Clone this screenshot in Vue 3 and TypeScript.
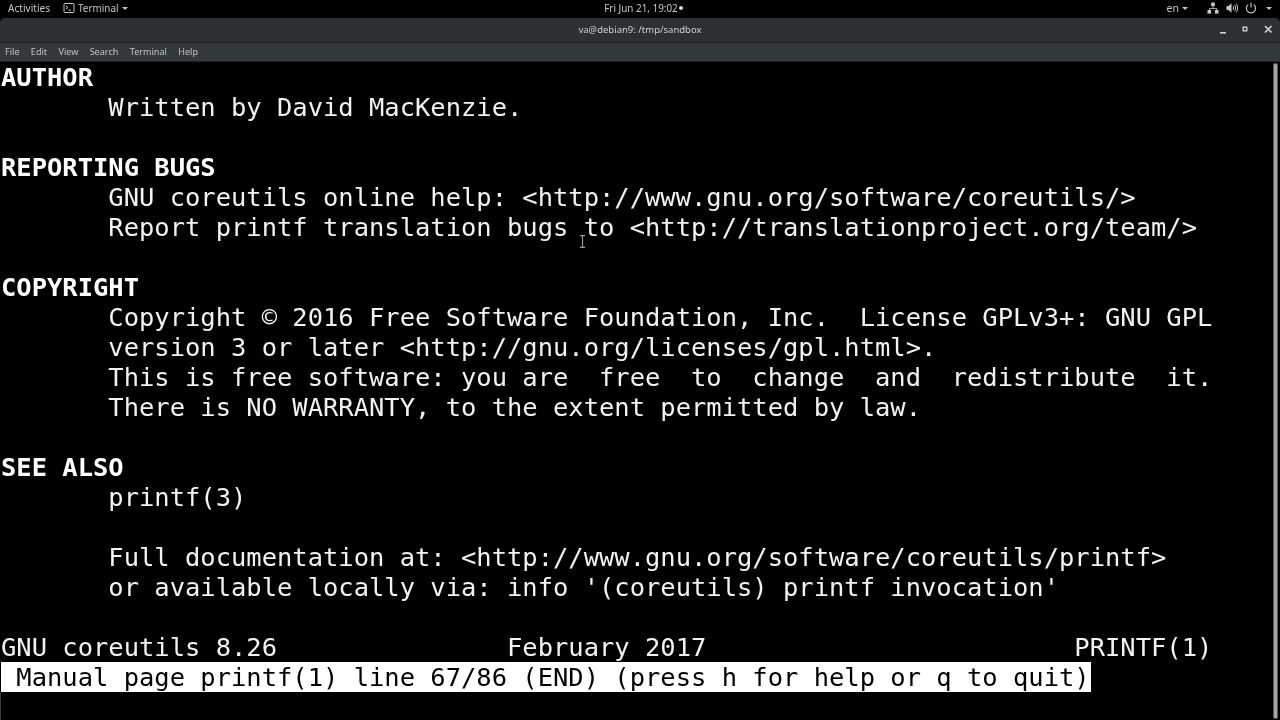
<script setup lang="ts">
interface Line { text: string; bold?: boolean; status?: boolean }
const lines: Line[] = [
  { text: 'AUTHOR', bold: true },
  { text: '       Written by David MacKenzie.' },
  { text: '' },
  { text: 'REPORTING BUGS', bold: true },
  { text: '       GNU coreutils online help: <http://www.gnu.org/software/coreutils/>' },
  { text: '       Report printf translation bugs to <http://translationproject.org/team/>' },
  { text: '' },
  { text: 'COPYRIGHT', bold: true },
  { text: '       Copyright © 2016 Free Software Foundation, Inc.  License GPLv3+: GNU GPL' },
  { text: '       version 3 or later <http://gnu.org/licenses/gpl.html>.' },
  { text: '       This is free software: you are  free  to  change  and  redistribute  it.' },
  { text: '       There is NO WARRANTY, to the extent permitted by law.' },
  { text: '' },
  { text: 'SEE ALSO', bold: true },
  { text: '       printf(3)' },
  { text: '' },
  { text: '       Full documentation at: <http://www.gnu.org/software/coreutils/printf>' },
  { text: "       or available locally via: info '(coreutils) printf invocation'" },
  { text: '' },
  { text: 'GNU coreutils 8.26               February 2017                        PRINTF(1)' },
  { text: ' Manual page printf(1) line 67/86 (END) (press h for help or q to quit)', status: true },
]
const menus = ['File', 'Edit', 'View', 'Search', 'Terminal', 'Help']
</script>

<template>
  <div class="screen">
    <header class="topbar">
      <div class="top-left">
        <span>Activities</span>
        <span class="app">
          <svg width="12" height="12" viewBox="0 0 12 12" fill="none" stroke="#c9c9c9">
            <rect x="1" y="1.5" width="10" height="9" rx="1" />
            <path d="M3 4l2 1.5L3 7M5.5 8H8" />
          </svg>
          <span class="app-name">Terminal</span>
          <i class="caret"></i>
        </span>
      </div>
      <div class="clock">Fri Jun 21, 19:02<i class="dot"></i></div>
      <div class="top-right">
        <span class="lang">en<i class="caret"></i></span>
        <svg width="12" height="12" viewBox="0 0 12 12" fill="#c9c9c9">
          <rect x="4.2" y="0.5" width="3.6" height="3.6" />
          <rect x="0.5" y="8" width="3.6" height="3.6" />
          <rect x="7.9" y="8" width="3.6" height="3.6" />
          <path d="M5.6 4h.8v2.2H10V8h-.8V7H2.8v1H2V6.2h3.6z" />
        </svg>
        <svg width="12" height="12" viewBox="0 0 12 12" fill="#c9c9c9">
          <path d="M0.5 4H2.5L5.5 1.2V10.8L2.5 8H0.5z" />
          <path d="M7 4c.8 1 .8 3 0 4M8.6 2.8c1.4 1.8 1.4 4.6 0 6.4M10.2 1.6c2 2.6 2 6.2 0 8.8" fill="none" stroke="#c9c9c9" />
        </svg>
        <svg width="12" height="12" viewBox="0 0 12 12" fill="none" stroke="#c9c9c9" stroke-width="1.1">
          <path d="M3.2 2.6a4.6 4.6 0 1 0 5.6 0M6 0.8v4.8" />
        </svg>
        <i class="caret end"></i>
      </div>
    </header>

    <section class="window">
      <div class="titlebar">
        <span class="title">va@debian9: /tmp/sandbox</span>
        <div class="controls">
          <svg width="9" height="9" viewBox="0 0 9 9"><rect x="1" y="6" width="6" height="1.6" fill="#d0d0d0" /></svg>
          <svg width="9" height="9" viewBox="0 0 9 9"><rect x="2.2" y="2.2" width="3.6" height="3.6" fill="none" stroke="#d8d8d8" stroke-width="1.3" /></svg>
          <svg width="9" height="9" viewBox="0 0 9 9"><path d="M1 1l6.5 6.5M7.5 1L1 7.5" stroke="#d0d0d0" stroke-width="1.7" /></svg>
        </div>
      </div>
      <nav class="menubar">
        <span v-for="m in menus" :key="m">{{ m }}</span>
      </nav>
      <div class="terminal">
        <pre class="output"><div v-for="(l, i) in lines" :key="i" class="row"><span :class="{ bold: l.bold, status: l.status }">{{ l.text }}</span></div></pre>
        <div class="scrolltrack"><div class="thumb"></div></div>
        <i class="edge"></i>
        <svg class="ibeam" width="7" height="13" viewBox="0 0 7 13" fill="none" stroke="#9a9a9a" stroke-width="1.2">
          <path d="M1 .6h5M3.5 .6v11.8M1 12.4h5" />
        </svg>
      </div>
    </section>
  </div>
</template>

<style>
html, body { margin: 0; background: #000; }
</style>

<style scoped>
.screen {
  width: 1280px;
  height: 720px;
  background: #000;
  display: flex;
  flex-direction: column;
  overflow: hidden;
  font-family: "Noto Sans", sans-serif;
  filter: blur(0.3px);
}
.topbar {
  height: 18px;
  flex: none;
  display: grid;
  grid-template-columns: 1fr auto 1fr;
  align-items: center;
  color: #c6c6c6;
  font-size: 10.1px;
  padding: 0 8px 2px 8px;
  box-sizing: border-box;
}
.top-left { display: flex; align-items: center; gap: 13px; }
.app { display: flex; align-items: center; gap: 4px; }
.app-name { font-size: 9.9px; margin-left: -1px; }
.top-right { display: flex; align-items: center; justify-content: flex-end; gap: 7px; }
.lang { display: flex; align-items: center; gap: 3px; margin-right: 12px; font-size: 10.5px; }
.caret {
  display: inline-block;
  width: 0;
  height: 0;
  border-left: 3px solid transparent;
  border-right: 3px solid transparent;
  border-top: 3px solid #c6c6c6;
}
.caret.end { margin-left: 2px; }
.clock { display: flex; align-items: center; gap: 1px; font-size: 9.9px; margin-left: 7px; }
.dot { width: 4px; height: 4px; border-radius: 50%; background: #d8d8d8; }
.window { flex: 1; display: flex; flex-direction: column; min-height: 0; }
.titlebar {
  height: 25px;
  flex: none;
  box-sizing: border-box;
  background: #2d3032;
  border-radius: 5px 5px 0 0;
  border-bottom: 1px solid #1d1f20;
  display: flex;
  align-items: center;
  justify-content: center;
  position: relative;
  color: #cfd1d1;
  font-size: 9.5px;
  padding-bottom: 1px;
}
.controls {
  position: absolute;
  right: 7px;
  top: 7px;
  display: flex;
  gap: 14px;
}
.controls svg:nth-child(1) { margin-top: 1px; transform: translateX(1px); }
.menubar {
  height: 19px;
  flex: none;
  box-sizing: border-box;
  background: #33393b;
  border-bottom: 1px solid #222;
  display: flex;
  align-items: center;
  gap: 11.3px;
  padding: 0 0 2px 5px;
  color: #bfc2c2;
  font-size: 9.1px;
}
.terminal {
  flex: 1;
  min-height: 0;
  display: flex;
  background: #000;
  position: relative;
}
.output {
  flex: 1;
  margin: 0;
  padding-left: 1px;
  font-family: "DejaVu Sans Mono", monospace;
  font-size: 25.47px;
  line-height: 30px;
  color: #f2f2f2;
  white-space: pre;
}
.row { height: 30px; }
.bold { font-weight: 700; color: #fff; }
.status { display: inline-block; height: 30px; padding-right: 1px; background: #fff; color: #000; }
.scrolltrack {
  width: 7px;
  flex: none;
  padding: 1px 2px 1px 0;
  box-sizing: border-box;
}
.thumb {
  height: 100%;
  box-sizing: border-box;
  border: 1px solid #5a5b5c;
  border-radius: 2px;
  background: #a4a5a6;
}
.edge {
  position: absolute;
  left: 0;
  top: 630px;
  bottom: 0;
  width: 1px;
  background: #3c3c3c;
}
.ibeam { position: absolute; left: 579px; top: 173px; }
</style>
